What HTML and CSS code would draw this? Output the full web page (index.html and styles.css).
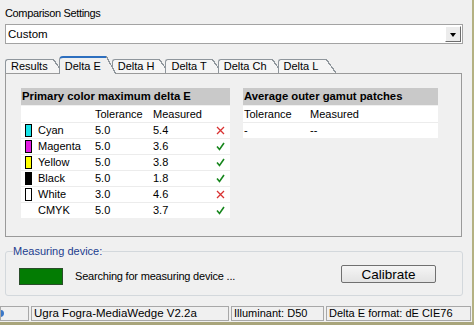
FILE: index.html
```html
<!DOCTYPE html>
<html lang="en">
<head>
    <meta charset="UTF-8">
    <title>Comparison Settings</title>
    <link rel="stylesheet" href="styles.css">
</head>
<body>
    <div class="window">
        <div class="main">
            <div class="caption">Comparison Settings</div>

            <!-- Preset combo -->
            <div class="combo">
                <span class="combo-text">Custom</span>
                <span class="combo-btn"><span class="arrow"></span></span>
            </div>

            <!-- Tabs -->
            <div class="tabs">
                <div class="tab">Results</div>
                <div class="tab active">Delta E</div>
                <div class="tab">Delta H</div>
                <div class="tab">Delta T</div>
                <div class="tab">Delta Ch</div>
                <div class="tab">Delta L</div>
            </div>

            <div class="panel">
                <div class="box primary">
                    <div class="box-title">Primary color maximum delta E</div>
                    <div class="box-body">
                        <div class="row head"><span></span><span></span><span>Tolerance</span><span>Measured</span><span></span></div>
                        <div class="row"><span class="swatch cyan"></span><span>Cyan</span><span>5.0</span><span>5.4</span><span class="mark"><svg width="9" height="9" viewBox="0 0 9 9"><path d="M1 1L8 8M8 1L1 8" class="cross"/></svg></span></div>
                        <div class="row"><span class="swatch magenta"></span><span>Magenta</span><span>5.0</span><span>3.6</span><span class="mark"><svg width="9" height="9" viewBox="0 0 9 9"><path d="M1 4.5L3.5 7.5L8 1" class="check"/></svg></span></div>
                        <div class="row"><span class="swatch yellow"></span><span>Yellow</span><span>5.0</span><span>3.8</span><span class="mark"><svg width="9" height="9" viewBox="0 0 9 9"><path d="M1 4.5L3.5 7.5L8 1" class="check"/></svg></span></div>
                        <div class="row"><span class="swatch black"></span><span>Black</span><span>5.0</span><span>1.8</span><span class="mark"><svg width="9" height="9" viewBox="0 0 9 9"><path d="M1 4.5L3.5 7.5L8 1" class="check"/></svg></span></div>
                        <div class="row"><span class="swatch white"></span><span>White</span><span>3.0</span><span>4.6</span><span class="mark"><svg width="9" height="9" viewBox="0 0 9 9"><path d="M1 1L8 8M8 1L1 8" class="cross"/></svg></span></div>
                        <div class="row"><span></span><span>CMYK</span><span>5.0</span><span>3.7</span><span class="mark"><svg width="9" height="9" viewBox="0 0 9 9"><path d="M1 4.5L3.5 7.5L8 1" class="check"/></svg></span></div>
                    </div>
                </div>

                <div class="box gamut">
                    <div class="box-title">Average outer gamut patches</div>
                    <div class="box-body">
                        <div class="row head"><span>Tolerance</span><span>Measured</span></div>
                        <div class="row"><span>-</span><span>--</span></div>
                    </div>
                </div>
            </div>

            <!-- Measuring device -->
            <fieldset class="device">
                <legend>Measuring device:</legend>
                <div class="device-row">
                    <span class="led"></span>
                    <span class="device-text">Searching for measuring device ...</span>
                    <button class="calibrate">Calibrate</button>
                </div>
            </fieldset>

            <div class="statusbar">
                <div class="pane first"><span class="dot"></span></div>
                <div class="pane wedge">Ugra Fogra-MediaWedge V2.2a</div>
                <div class="pane illum">Illuminant: D50</div>
                <div class="pane format">Delta E format: dE CIE76</div>
            </div>
        </div>
        <div class="edge"></div>
    </div>
    <div class="strip"></div>
</body>
</html>
```

FILE: styles.css
```css
body {
    margin: 0;
    width: 474px;
    height: 325px;
    overflow: hidden;
    background-color: #f0f0f0;
    font-family: "Liberation Sans", Arial, sans-serif;
    font-size: 11px;
    color: #000;
}
.window {
    display: flex;
    height: 322px;
}
.main {
    width: 472px;
    display: flex;
    flex-direction: column;
}
.edge {
    width: 2px;
    background-color: #b4b182;
}
.strip {
    height: 3px;
    background-color: #a9a57b;
}
.caption {
    margin: 6px 0 0 5px;
    line-height: 14px;
    letter-spacing: -0.35px;
}
.combo {
    margin: 4px 0 0 5px;
    width: 458px;
    height: 20px;
    box-sizing: border-box;
    border: 1px solid #a3a3a3;
    background-color: #fff;
    display: flex;
    align-items: center;
    padding: 0 0 0 2px;
}
.combo-text {
    flex: 1;
    font-size: 11.5px;
}
.combo-btn {
    width: 16px;
    height: 16px;
    box-sizing: border-box;
    border: 1px solid;
    border-color: #fff #6d6d6d #6d6d6d #fff;
    background-color: #ececec;
    margin-right: 1px;
    display: flex;
    align-items: center;
    justify-content: center;
}
.arrow {
    border-left: 3px solid transparent;
    border-right: 3px solid transparent;
    border-top: 4px solid #000;
    margin-top: 1px;
}
.tabs {
    display: flex;
    align-items: flex-end;
    margin: 12px 0 0 5px;
    height: 18px;
    position: relative;
    z-index: 1;
}
.tab {
    position: relative;
    line-height: 13px;
    padding: 0 5px 0 5px;
    margin: 0 6px 1px 0;
    border: 1px solid #8f969c;
    border-right: none;
    border-bottom: none;
    border-top-left-radius: 3px;
    background-color: #f5f5f5;
}
.tab::after {
    content: "";
    position: absolute;
    top: -1px;
    bottom: 0;
    right: -10px;
    width: 10px;
    background: linear-gradient(to top right, #f5f5f5 calc(50% - 0.6px), #8f969c calc(50% - 0.6px), #8f969c calc(50% + 0.6px), transparent calc(50% + 0.6px));
}
.tab:last-child {
    padding-right: 8px;
}
.tab.active {
    z-index: 2;
    margin-bottom: 0;
    padding-top: 2px;
    padding-bottom: 1px;
    border-top: 2px solid #2d6fbf;
    border-top-left-radius: 4px;
    background-color: #f0f0f0;
}
.tab.active::after {
    top: -2px;
    background: linear-gradient(to top right, #f0f0f0 calc(50% - 0.6px), #8f969c calc(50% - 0.6px), #8f969c calc(50% + 0.6px), transparent calc(50% + 0.6px));
}
.panel {
    margin: -1px 0 0 5px;
    width: 457px;
    height: 164px;
    box-sizing: border-box;
    border: 1px solid #9a9a9a;
    display: flex;
    align-items: flex-start;
    gap: 13px;
    padding: 14px 0 0 15px;
}
.box-title {
    height: 17px;
    line-height: 16px;
    background-color: #c9c9c9;
    font-weight: bold;
    font-size: 11.3px;
    padding-left: 1px;
    margin-bottom: 1px;
}
.box-body {
    background-color: #fff;
}
.primary {
    width: 209px;
}
.gamut {
    width: 195px;
}
.row {
    display: grid;
    height: 16px;
    box-sizing: border-box;
    border-top: 1px solid #ececec;
    line-height: 15px;
    align-items: center;
}
.row.head {
    border-top: none;
    line-height: 16px;
}
.primary .row {
    grid-template-columns: 17px 57px 58px 63px 14px;
}
.gamut .row {
    grid-template-columns: 66px 1fr;
    padding-left: 1px;
}
.swatch {
    width: 7px;
    height: 13px;
    box-sizing: border-box;
    border: 1px solid #000;
    margin-left: 4px;
}
.cyan { background-color: #19e3e8; }
.magenta { background-color: #e31be3; }
.yellow { background-color: #ffff00; }
.black { background-color: #000; }
.white { background-color: #fff; }
.mark {
    display: flex;
    align-items: center;
}
.mark svg {
    display: block;
}
.cross {
    fill: none;
    stroke: #d93232;
    stroke-width: 1.3;
}
.check {
    fill: none;
    stroke: #16861c;
    stroke-width: 1.6;
}
.device {
    margin: 8px 0 0 5px;
    width: 458px;
    box-sizing: border-box;
    border: 1px solid #d3d8dc;
    border-radius: 3px;
    padding: 0 0 10px 13px;
    min-width: 0;
}
.device legend {
    padding: 0;
    margin-left: -6px;
    line-height: 13px;
    color: #1d3e8f;
}
.device-row {
    display: flex;
    align-items: flex-start;
    margin-top: 7px;
}
.led {
    width: 44px;
    height: 17px;
    margin-top: 3px;
    box-sizing: border-box;
    border: 1px solid #2a4d2a;
    background-color: #037c03;
}
.device-text {
    margin: 4px 0 0 12px;
    line-height: 14px;
    letter-spacing: -0.2px;
}
.calibrate {
    margin: 0 26px 0 auto;
    width: 95px;
    height: 18px;
    padding: 0;
    border: 1px solid #707070;
    border-radius: 2px;
    background: linear-gradient(#f5f5f5, #e3e3e3);
    font-family: "Liberation Sans", Arial, sans-serif;
    font-size: 13.5px;
    line-height: 15px;
    color: #000;
}
.statusbar {
    display: flex;
    gap: 2px;
    margin-top: 10px;
    height: 15px;
}
.pane {
    box-sizing: border-box;
    height: 15px;
    border: 1px solid #a8a8a8;
    line-height: 13px;
    padding-left: 2px;
    white-space: nowrap;
    overflow: hidden;
}
.first {
    width: 29px;
    padding-left: 0;
}
.dot {
    display: block;
    width: 8px;
    height: 7px;
    margin: 3px 0 0 -5px;
    border-radius: 50%;
    background-color: #3a78c8;
}
.wedge { width: 198px; font-size: 11.5px; }
.illum { width: 93px; }
.format { width: 145px; }
```
